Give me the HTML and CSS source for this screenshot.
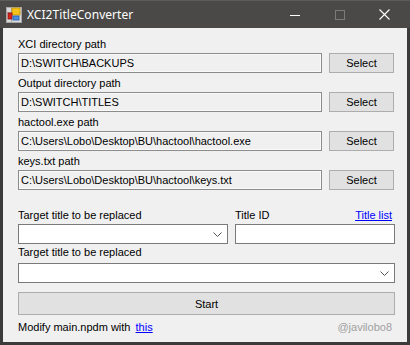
FILE: index.html
```html
<!DOCTYPE html>
<html>
<head>
<meta charset="utf-8">
<link rel="stylesheet" href="styles.css">
</head>
<body>
<div class="window">
  <div class="titlebar">
    <svg class="app-icon" width="16" height="16" viewBox="0 0 16 16">
      <rect x="0.5" y="0.5" width="15" height="15" fill="#d8d8d8" stroke="#a8a8a8"/>
      <line x1="0.5" y1="5.5" x2="15.5" y2="5.5" stroke="#a8a8a8"/>
      <line x1="5.5" y1="0.5" x2="5.5" y2="15.5" stroke="#a8a8a8"/>
      <rect x="6" y="1" width="8" height="7" fill="#f4c21a" stroke="#c89000" stroke-width="0.8"/>
      <rect x="2" y="6" width="4" height="6" fill="#d8241c" stroke="#901010" stroke-width="0.8"/>
      <rect x="7" y="9" width="6" height="4" fill="#4a8ee0" stroke="#2060b0" stroke-width="0.8"/>
    </svg>
    <span class="title">XCI2TitleConverter</span>
    <div class="caption-buttons">
      <div class="cap-btn"><svg width="10" height="10" viewBox="0 0 10 10"><line x1="0" y1="5.5" x2="10" y2="5.5" stroke="#fff" stroke-width="1"/></svg></div>
      <div class="cap-btn"><svg width="10" height="10" viewBox="0 0 10 10"><rect x="0.5" y="0.5" width="9" height="9" fill="none" stroke="#7a7a7a"/></svg></div>
      <div class="cap-btn"><svg width="11" height="11" viewBox="0 0 11 11"><path d="M0.5 0.5 L10.5 10.5 M10.5 0.5 L0.5 10.5" stroke="#fff" stroke-width="1.1"/></svg></div>
    </div>
  </div>
  <div class="client">
    <div class="group">
      <div class="label">XCI directory path</div>
      <div class="row">
        <div class="textbox ro">D:\SWITCH\BACKUPS</div>
        <div class="button select">Select</div>
      </div>
    </div>
    <div class="group">
      <div class="label">Output directory path</div>
      <div class="row">
        <div class="textbox ro">D:\SWITCH\TITLES</div>
        <div class="button select">Select</div>
      </div>
    </div>
    <div class="group">
      <div class="label">hactool.exe path</div>
      <div class="row">
        <div class="textbox ro">C:\Users\Lobo\Desktop\BU\hactool\hactool.exe</div>
        <div class="button select">Select</div>
      </div>
    </div>
    <div class="group">
      <div class="label">keys.txt path</div>
      <div class="row">
        <div class="textbox ro">C:\Users\Lobo\Desktop\BU\hactool\keys.txt</div>
        <div class="button select">Select</div>
      </div>
    </div>

    <div class="target-row">
      <div class="col-left">
        <div class="label">Target title to be replaced</div>
        <div class="combo">
          <svg class="chev" width="9" height="5" viewBox="0 0 9 5"><polyline points="0.5,0.5 4.5,4.5 8.5,0.5" fill="none" stroke="#555" stroke-width="1"/></svg>
        </div>
      </div>
      <div class="col-right">
        <div class="label split"><span>Title ID</span><a class="link" href="#">Title list</a></div>
        <div class="textbox white"></div>
      </div>
    </div>

    <div class="label second">Target title to be replaced</div>
    <div class="combo">
      <svg class="chev" width="9" height="5" viewBox="0 0 9 5"><polyline points="0.5,0.5 4.5,4.5 8.5,0.5" fill="none" stroke="#555" stroke-width="1"/></svg>
    </div>

    <div class="button start">Start</div>

    <div class="footer">
      <span>Modify main.npdm with <a class="link" href="#">this</a></span>
      <span class="credit">@javilobo8</span>
    </div>
  </div>
</div>
</body>
</html>
```

FILE: styles.css
```css
* { box-sizing: border-box; }
html, body { margin: 0; padding: 0; }
body {
  width: 410px;
  height: 345px;
  overflow: hidden;
  background: #3a3a3a;
  font-family: "Liberation Sans", Arial, sans-serif;
  font-size: 11px;
  color: #000;
}
.window {
  width: 410px;
  height: 345px;
  background: #3b3b3b;
  display: flex;
  flex-direction: column;
}
.titlebar {
  height: 28px;
  background: #4a4947;
  border-top: 1px solid #5c5c5c;
  display: flex;
  align-items: center;
  padding-left: 6px;
  color: #fff;
}
.app-icon { flex: none; margin-top: 1px; }
.title {
  font-family: "Noto Sans", "Open Sans", sans-serif;
  font-size: 12px;
  margin-left: 5px;
  margin-top: -1px;
  letter-spacing: 0.05px;
}
.caption-buttons {
  margin-left: auto;
  display: flex;
  height: 100%;
  margin-right: 3px;
}
.cap-btn {
  width: 45px;
  height: 100%;
  display: flex;
  align-items: center;
  justify-content: center;
}
.client {
  margin: 0 3px 3px 3px;
  flex: 1;
  background: #f0f0f0;
  padding: 9px 12px 0 15px;
}
.label {
  height: 15px;
  line-height: 15px;
  margin-bottom: 1px;
  white-space: nowrap;
}
.group { margin-bottom: 3px; }
.row {
  display: flex;
  gap: 7px;
}
.textbox {
  height: 20px;
  border: 1px solid #7a7a7a;
  line-height: 18px;
  padding-left: 2px;
  white-space: nowrap;
  overflow: hidden;
}
.textbox.ro {
  width: 304px;
  background: #f0f0f0;
  border-color: #8c8c8c;
  box-shadow: inset 0 0 0 1px #fafafa;
}
.textbox.white { background: #fff; }
.button {
  background: #e1e1e1;
  border: 1px solid #adadad;
  display: flex;
  align-items: center;
  justify-content: center;
}
.button.select {
  width: 65px;
  height: 20px;
}
.target-row {
  display: flex;
  gap: 7px;
  margin-top: 18px;
}
.col-left { width: 210px; }
.col-right { width: 160px; }
.label.split {
  display: flex;
  justify-content: space-between;
  padding-right: 3px;
}
.link { color: #0000ff; text-decoration: underline; }
.combo {
  position: relative;
  height: 20px;
  background: #fff;
  border: 1px solid #7a7a7a;
}
.chev {
  position: absolute;
  right: 5px;
  top: 7px;
}
.label.second { margin-top: 1px; margin-bottom: 3px; }
.button.start {
  margin-top: 9px;
  height: 23px;
  width: 377px;
}
.footer {
  margin-top: 5px;
  height: 15px;
  line-height: 15px;
  display: flex;
  justify-content: space-between;
  padding-right: 3px;
}
.footer .link { margin-left: 2px; }
.credit { color: #a0a0a0; }
```
